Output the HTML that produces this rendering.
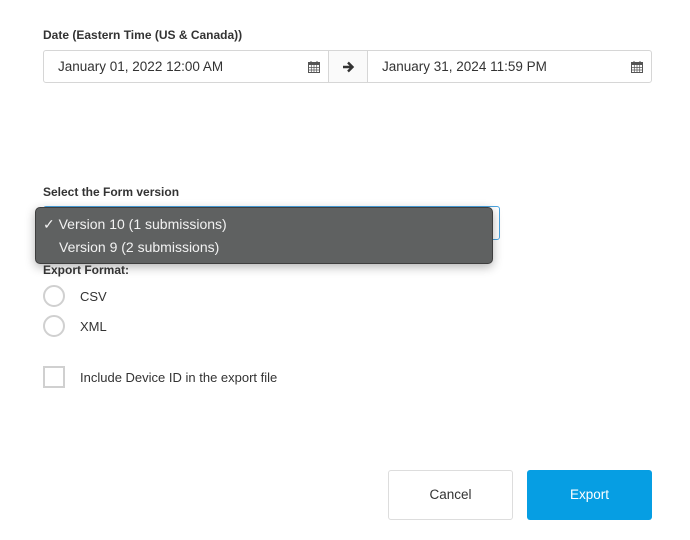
<!DOCTYPE html>
<html><head><meta charset="utf-8">
<style>
*{box-sizing:border-box;margin:0;padding:0}
body{width:690px;height:540px;background:#fff;font-family:"Liberation Sans",sans-serif;color:#333;position:relative;overflow:hidden}
.abs{position:absolute}
.lbl{font-size:12px;font-weight:bold;color:#333}
.inp{border:1px solid #d6d6d6;height:33px;font-size:13.5px;color:#333;line-height:31px;padding-left:14px}
.cal{position:absolute;right:8px;top:10px}
.radio{width:22px;height:22px;border:2px solid #d0d0d0;border-radius:50%}
.opt{font-size:13px;color:#333}
</style></head><body>
<div class="abs lbl" style="left:43px;top:28px">Date (Eastern Time (US &amp; Canada))</div>
<div class="abs inp" style="left:43px;top:50px;width:286px;border-radius:3px 0 0 3px">January 01, 2022 12:00 AM
<svg class="cal" width="12" height="12" viewBox="0 0 12 12"><rect x="0.5" y="1.5" width="11" height="10" fill="none" stroke="#555"/><rect x="0.5" y="1.5" width="11" height="2.5" fill="#555"/><path d="M3 0v3M9 0v3" stroke="#555"/><path d="M0.5 6.5h11M0.5 9h11M3.3 4v7.5M6 4v7.5M8.7 4v7.5" stroke="#555" stroke-width="0.7"/></svg></div>
<div class="abs" style="left:328px;top:50px;width:40px;height:33px;border:1px solid #d6d6d6;background:#fafafa">
<svg style="position:absolute;left:13px;top:10px" width="13" height="12" viewBox="0 0 13 12"><path d="M1 6h9M6 1.5l4.5 4.5L6 10.5" stroke="#333" stroke-width="2.4" fill="none"/></svg></div>
<div class="abs inp" style="left:367px;top:50px;width:285px;border-radius:0 3px 3px 0">January 31, 2024 11:59 PM
<svg class="cal" width="12" height="12" viewBox="0 0 12 12"><rect x="0.5" y="1.5" width="11" height="10" fill="none" stroke="#555"/><rect x="0.5" y="1.5" width="11" height="2.5" fill="#555"/><path d="M3 0v3M9 0v3" stroke="#555"/><path d="M0.5 6.5h11M0.5 9h11M3.3 4v7.5M6 4v7.5M8.7 4v7.5" stroke="#555" stroke-width="0.7"/></svg></div>

<div class="abs lbl" style="left:43px;top:185px">Select the Form version</div>
<div class="abs" style="left:43px;top:206px;width:457px;height:34px;border:1px solid #4aa3df;border-radius:3px"></div>
<div class="abs" style="left:35px;top:207px;width:458px;height:57px;background:#5f6161;border:1px solid #3e3e3e;border-radius:5px;box-shadow:0 3px 10px rgba(0,0,0,.3);color:#f2f2f2;font-size:14px">
<div style="position:absolute;left:7px;top:8px">✓ Version 10 (1 submissions)</div>
<div style="position:absolute;left:23px;top:31px">Version 9 (2 submissions)</div>
</div>
<div class="abs lbl" style="left:43px;top:263px">Export Format:</div>
<div class="abs radio" style="left:43px;top:285px"></div>
<div class="abs opt" style="left:80px;top:289px">CSV</div>
<div class="abs radio" style="left:43px;top:315px"></div>
<div class="abs opt" style="left:80px;top:319px">XML</div>
<div class="abs" style="left:43px;top:366px;width:22px;height:22px;border:2px solid #d0d0d0"></div>
<div class="abs opt" style="left:80px;top:370px">Include Device ID in the export file</div>

<div class="abs" style="left:388px;top:470px;width:125px;height:50px;border:1px solid #ddd;border-radius:3px;text-align:center;line-height:48px;font-size:13.5px;color:#333">Cancel</div>
<div class="abs" style="left:527px;top:470px;width:125px;height:50px;background:#069ee3;border-radius:3px;text-align:center;line-height:50px;font-size:13.5px;color:#fff">Export</div>
</body></html>
